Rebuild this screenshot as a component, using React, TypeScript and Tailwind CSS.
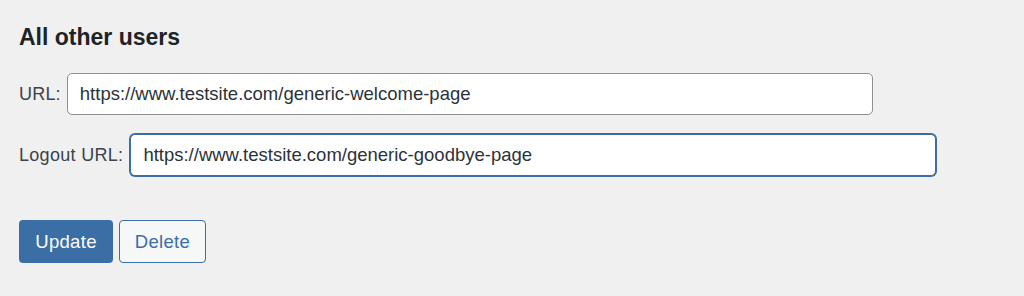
export default function App() {
  return (
    <div className="h-[296px] w-full bg-[#f0f0f0] px-[19px] pt-[22px] font-['Liberation_Sans',Arial,sans-serif]">
      <h2 className="text-[23px] font-bold leading-[30px] text-[#1d2327]">All other users</h2>

      <div className="mt-[21px] flex items-center gap-[6px]">
        <label className="text-[18px] tracking-[0.2px] text-[#3c434a]">URL:</label>
        <input
          className="h-[42px] w-[806px] rounded-[5px] border border-[#8c8f94] bg-white px-[12px] text-[18.5px] text-[#2c3338] outline-none"
          defaultValue="https://www.testsite.com/generic-welcome-page"
        />
      </div>

      <div className="mt-[19px] flex items-center gap-[7px]">
        <label className="text-[18px] tracking-[0.3px] text-[#3c434a]">Logout URL:</label>
        <input
          className="h-[42px] w-[806px] rounded-[5px] border border-[#3b6ea5] bg-white px-[12px] text-[18.5px] text-[#2c3338] shadow-[0_0_0_1px_#3b6ea5] outline-none"
          defaultValue="https://www.testsite.com/generic-goodbye-page"
        />
      </div>

      <div className="mt-[44px] flex gap-[6px]">
        <button className="h-[43px] w-[94px] rounded-[4px] bg-[#3b6ea5] text-[18.5px] tracking-[0.3px] text-white">Update</button>
        <button className="h-[43px] w-[87px] rounded-[4px] border border-[#3b6ea5] bg-[#f6f7f7] text-[18.5px] tracking-[0.3px] text-[#3b6ea5]">Delete</button>
      </div>
    </div>
  );
}
